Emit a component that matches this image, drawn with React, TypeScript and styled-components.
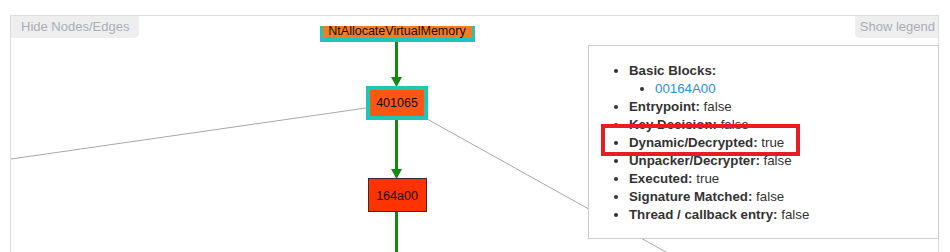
import React from 'react'
import styled, { createGlobalStyle } from 'styled-components'

const GlobalStyle = createGlobalStyle`
  html, body {
    margin: 0;
    padding: 0;
    background: #ffffff;
    font-family: 'Liberation Sans', Arial, sans-serif;
    overflow: hidden;
  }
`

const Page = styled.div`
  width: 950px;
  height: 252px;
  padding: 15px 0 0 10px;
  box-sizing: border-box;
  overflow: hidden;
`

const Canvas = styled.div`
  position: relative;
  width: 929px;
  height: 260px;
  box-sizing: border-box;
  border: 1px solid #dddddd;
  background: #ffffff;
`

const Graph = styled.svg`
  position: absolute;
  left: 0;
  top: 0;
  width: 927px;
  height: 258px;
  font-family: 'Liberation Sans', Arial, sans-serif;
`

const ToggleButton = styled.button<{ $side: 'left' | 'right' }>`
  position: absolute;
  top: 0;
  ${(p) => (p.$side === 'left' ? 'left: 0;' : 'right: 0;')}
  height: 22px;
  padding: ${(p) => (p.$side === 'left' ? '0 10px 0 10px' : '0 3px 0 5px')};
  border: none;
  border-radius: ${(p) => (p.$side === 'left' ? '0 0 5px 0' : '0 0 0 5px')};
  background: #eeeeee;
  color: #a9aeb8;
  font-family: 'Liberation Sans', Arial, sans-serif;
  font-size: 13px;
  line-height: 22px;
  cursor: pointer;
`

const Legend = styled.div`
  position: absolute;
  top: 29px;
  right: -1px;
  width: 351px;
  height: 194px;
  box-sizing: border-box;
  border: 1px solid #cccccc;
  background: #ffffff;
  padding-top: 16px;
`

const List = styled.ul<{ $nested?: boolean }>`
  margin: 0;
  padding-left: ${(p) => (p.$nested ? '26px' : '40px')};
  list-style: disc;
  color: #333333;
  font-size: 13.3px;
  line-height: 18px;
`

const Item = styled.li``

const Label = styled.b`
  font-weight: bold;
`

const BlockLink = styled.a`
  color: #2a8fd6;
  text-decoration: none;
`

const Highlight = styled.div`
  position: absolute;
  left: 12px;
  top: 78px;
  width: 199px;
  height: 32px;
  box-sizing: border-box;
  border: 4px solid #e81c24;
  pointer-events: none;
`

const TEAL = '#1fc6b5'
const GREEN = '#118a11'

const props: [string, string][] = [
  ['Entrypoint:', 'false'],
  ['Key Decision:', 'false'],
  ['Dynamic/Decrypted:', 'true'],
  ['Unpacker/Decrypter:', 'false'],
  ['Executed:', 'true'],
  ['Signature Matched:', 'false'],
  ['Thread / callback entry:', 'false'],
]

const Arrow = ({ x, y1, y2 }: { x: number; y1: number; y2: number }) => (
  <g>
    <line x1={x} y1={y1} x2={x} y2={y2 - 9} stroke={GREEN} strokeWidth={3} />
    <polygon points={`${x - 5.5},${y2 - 10} ${x + 5.5},${y2 - 10} ${x},${y2}`} fill={GREEN} />
  </g>
)

export default function App() {
  return (
    <>
      <GlobalStyle />
      <Page>
        <Canvas>
          <Graph viewBox="11 16 927 258">
            <defs>
              <clipPath id="view">
                <rect x={11} y={26} width={927} height={260} />
              </clipPath>
            </defs>
            <g clipPath="url(#view)">
              <line x1={366} y1={108} x2={11} y2={159} stroke="#a8a8a8" strokeWidth={1} />
              <line x1={427} y1={119} x2={700} y2={271} stroke="#a8a8a8" strokeWidth={1} />

              <Arrow x={396.5} y1={42} y2={87} />
              <Arrow x={396.5} y1={120} y2={179} />
              <line x1={396.5} y1={212} x2={396.5} y2={280} stroke={GREEN} strokeWidth={3} />

              <rect x={320} y={18} width={155} height={24} fill={TEAL} />
              <rect x={323} y={18} width={149} height={20} fill="#fa7a22" />
              <text x={397} y={35} textAnchor="middle" fontSize={12.5} fill="#111">
                NtAllocateVirtualMemory
              </text>

              <rect x={366} y={86} width={62} height={34} fill={TEAL} />
              <rect x={370} y={90} width={54} height={26} fill="#ff5611" />
              <text x={397} y={107} textAnchor="middle" fontSize={12.5} fill="#111">
                401065
              </text>

              <rect x={368.5} y={178.5} width={58} height={33} fill="#ff3300" stroke="#3a2a2a" strokeWidth={1} />
              <text x={397} y={199.5} textAnchor="middle" fontSize={12.5} fill="#111">
                164a00
              </text>
            </g>
          </Graph>

          <ToggleButton $side="left">Hide Nodes/Edges</ToggleButton>
          <ToggleButton $side="right">Show legend</ToggleButton>

          <Legend>
            <List>
              <Item>
                <Label>Basic Blocks:</Label>
                <List $nested>
                  <Item>
                    <BlockLink href="#">00164A00</BlockLink>
                  </Item>
                </List>
              </Item>
              {props.map(([k, v]) => (
                <Item key={k}>
                  <Label>{k}</Label> {v}
                </Item>
              ))}
            </List>
            <Highlight />
          </Legend>
        </Canvas>
      </Page>
    </>
  )
}
